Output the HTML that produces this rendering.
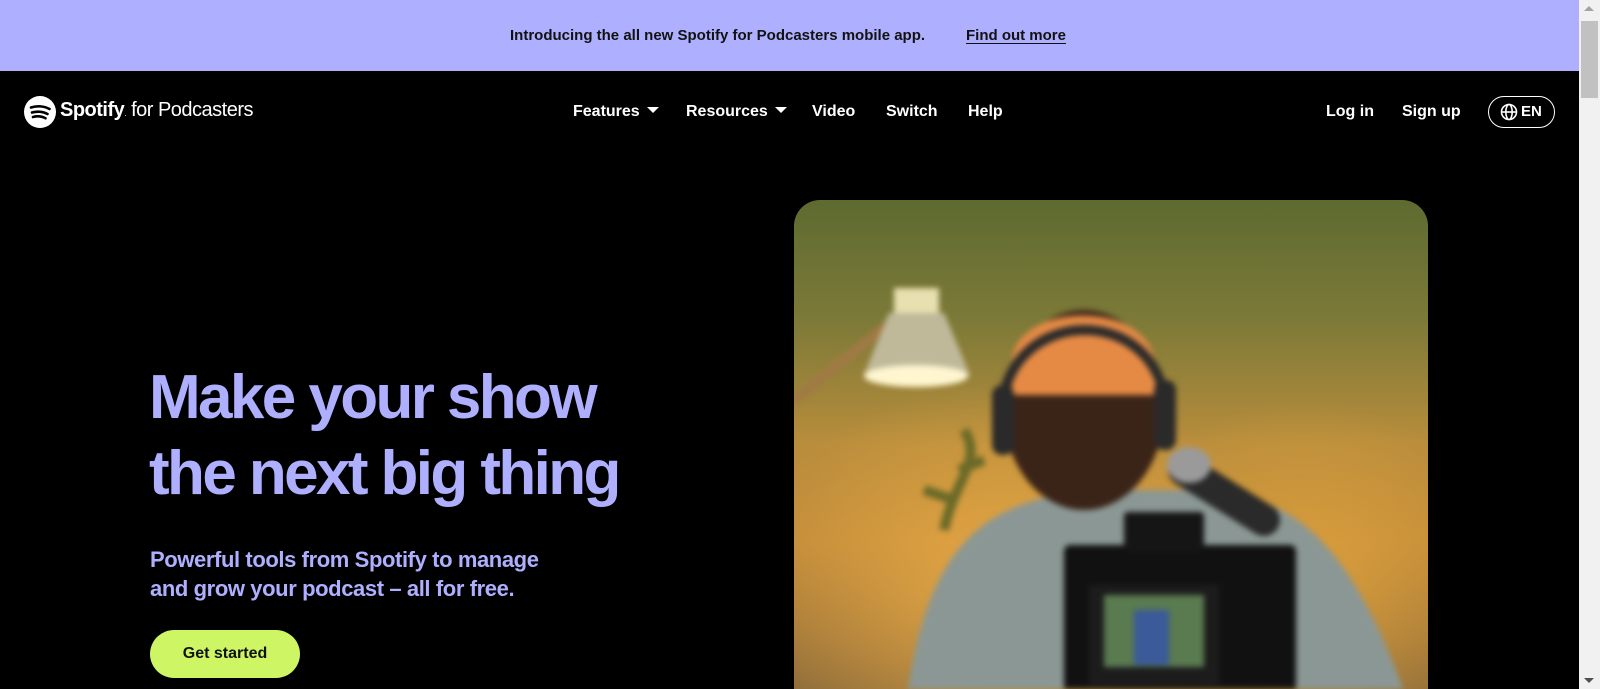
<!DOCTYPE html>
<html><head><meta charset="utf-8"><style>
*{margin:0;padding:0;box-sizing:border-box}
html,body{width:1600px;height:689px;overflow:hidden;background:#000;font-family:"Liberation Sans",Arial,sans-serif}
.banner{position:absolute;left:0;top:0;width:1579px;height:71px;background:#afafff;color:#121212;font-size:15px;font-weight:bold}
.banner .t{position:absolute;left:510px;top:27px;white-space:nowrap}
.banner .l{position:absolute;left:966px;top:27px;text-decoration:underline;text-underline-offset:3px}
.nav{position:absolute;top:0;left:0;color:#fff;font-weight:bold;font-size:16px}
.ni{position:absolute;top:103px;white-space:nowrap}
.caret{display:inline-block;width:0;height:0;border-left:6px solid transparent;border-right:6px solid transparent;border-top:6px solid #fff;margin-left:7px;vertical-align:3px}
.pill{position:absolute;left:1488px;top:96px;width:67px;height:32px;border:1.5px solid #fff;border-radius:16px;color:#fff;font-weight:bold;font-size:15px}
h1{position:absolute;left:149px;top:360px;color:#afafff;font-size:62px;line-height:76px;letter-spacing:-2.6px;font-weight:bold;white-space:nowrap}
.sub{position:absolute;left:150px;top:545px;color:#afafff;font-size:22px;line-height:29px;letter-spacing:-0.4px;font-weight:bold;white-space:nowrap}
.btn{position:absolute;left:150px;top:630px;width:150px;height:48px;border-radius:24px;background:#cdf564;color:#121212;font-weight:bold;font-size:16px;text-align:center;line-height:48px}
.photo{position:absolute;left:794px;top:200px;width:634px;height:489px;border-radius:26px 26px 0 0;overflow:hidden;
background:linear-gradient(180deg,#5d6a30 0%,#7d7a38 25%,#b98d3c 50%,#c08a3a 70%,#8a6a3a 100%)}
.scroll{position:absolute;left:1579px;top:0;width:21px;height:689px;background:#f1f1f1}
.thumb{position:absolute;left:2px;top:21px;width:17px;height:77px;background:#c1c1c1}
</style></head><body>
<div class="banner"><span class="t">Introducing the all new Spotify for Podcasters mobile app.</span><span class="l">Find out more</span></div>

<svg style="position:absolute;left:24px;top:96px" width="32" height="32" viewBox="0 0 32 32"><circle cx="16" cy="16" r="16" fill="#fff"/><path d="M7 11.5c6-2 13-1.5 18.5 1.5M8 16.5c5-1.5 11-1 15.5 1.5M9 21c4-1 9-.7 12.5 1.3" stroke="#000" stroke-width="2.6" fill="none" stroke-linecap="round"/></svg>
<div style="position:absolute;left:60px;top:99px;color:#fff;font-size:20px;white-space:nowrap;letter-spacing:-0.5px"><b>Spotify</b><span style="font-size:8px">.</span> for Podcasters</div>

<div class="nav">
<span class="ni" style="left:573px">Features<span class="caret"></span></span>
<span class="ni" style="left:686px">Resources<span class="caret"></span></span>
<span class="ni" style="left:812px">Video</span>
<span class="ni" style="left:886px">Switch</span>
<span class="ni" style="left:968px">Help</span>
<span class="ni" style="left:1326px">Log in</span>
<span class="ni" style="left:1402px">Sign up</span>
</div>
<div class="pill"><svg style="position:absolute;left:11px;top:6px" width="18" height="18" viewBox="0 0 18 18" fill="none" stroke="#fff" stroke-width="1.6"><circle cx="9" cy="9" r="7.5"/><ellipse cx="9" cy="9" rx="3.2" ry="7.5"/><path d="M1.5 9h15"/></svg><span style="position:absolute;left:32px;top:6px">EN</span></div>

<h1>Make your show<br>the next big thing</h1>
<div class="sub">Powerful tools from Spotify to manage<br>and grow your podcast – all for free.</div>
<div class="btn">Get started</div>

<div class="photo">
<div style="position:absolute;left:-60px;top:180px;width:560px;height:420px;background:radial-gradient(ellipse at 50% 50%,rgba(240,175,70,.85),rgba(220,150,60,0) 70%)"></div>
<div style="position:absolute;left:300px;top:200px;width:420px;height:380px;background:radial-gradient(ellipse at 50% 50%,rgba(235,170,60,.7),rgba(220,150,60,0) 70%)"></div>
<svg width="634" height="489" style="position:absolute;left:0;top:0;filter:blur(3px)">
<path d="M0 200 L115 108" stroke="#a07a45" stroke-width="10"/>
<rect x="100" y="88" width="45" height="25" fill="#e8e0b0"/>
<path d="M95 113 L150 113 L176 175 L70 175 Z" fill="#bfb99a"/>
<ellipse cx="122" cy="176" rx="52" ry="11" fill="#fff6d0"/>
<path d="M150 330 C160 280 190 260 170 230 M160 300 L130 290 M165 270 L190 260" stroke="#6b6a28" stroke-width="10" fill="none"/>
<path d="M110 520 C130 330 200 300 300 290 L420 290 C500 300 560 340 620 520 Z" fill="#8b9794"/>
<ellipse cx="290" cy="210" rx="80" ry="100" fill="#3a2418"/>
<path d="M218 170 C210 100 362 95 362 170 L362 195 L218 195 Z" fill="#e58a45"/>
<path d="M208 230 C195 100 380 95 372 225" stroke="#2a2a2a" stroke-width="10" fill="none"/>
<rect x="198" y="185" width="22" height="70" rx="10" fill="#2a2a2a"/>
<rect x="360" y="180" width="22" height="70" rx="10" fill="#2a2a2a"/>
<path d="M390 270 L470 320" stroke="#2a2a2a" stroke-width="32" stroke-linecap="round"/>
<ellipse cx="395" cy="265" rx="22" ry="18" fill="#9a9a9a"/>
<rect x="270" y="345" width="232" height="165" rx="6" fill="#111"/>
<rect x="330" y="312" width="80" height="40" rx="4" fill="#151515"/>
<rect x="295" y="385" width="130" height="100" fill="#1c1c1c"/>
<rect x="310" y="395" width="100" height="72" fill="#5a7a50"/>
<rect x="340" y="410" width="35" height="55" fill="#3a5a9a"/>
</svg>
</div>

<div class="scroll"><div style="position:absolute;left:5px;top:6px;border-left:5px solid transparent;border-right:5px solid transparent;border-bottom:5px solid #a3a3a3"></div><div class="thumb"></div><div style="position:absolute;left:5px;bottom:6px;border-left:5px solid transparent;border-right:5px solid transparent;border-top:5px solid #505050"></div></div>
</body></html>
